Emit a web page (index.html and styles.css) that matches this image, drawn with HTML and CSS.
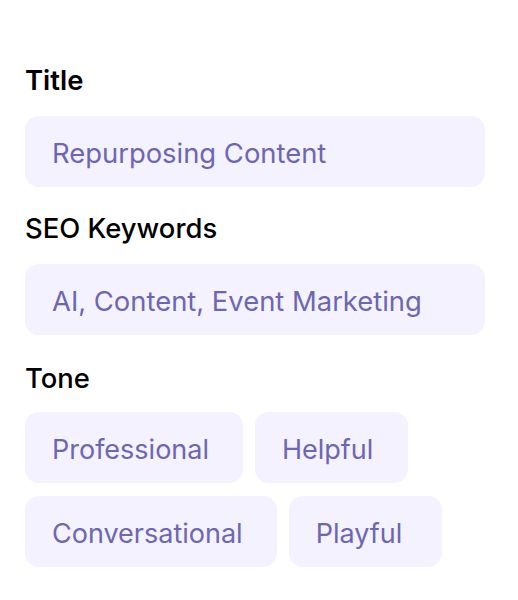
FILE: index.html
```html
<!DOCTYPE html>
<html>
<head>
<meta charset="utf-8">
<link rel="stylesheet" href="styles.css">
</head>
<body>
<div class="form">
  <div class="label label-title">Title</div>
  <div class="field">Repurposing Content</div>
  <div class="label label-seo">SEO Keywords</div>
  <div class="field">AI, Content, Event Marketing</div>
  <div class="label label-tone">Tone</div>
  <div class="chips">
    <div class="chip">Professional</div>
    <div class="chip">Helpful</div>
    <div class="chip">Conversational</div>
    <div class="chip">Playful</div>
  </div>
</div>
</body>
</html>
```
FILE: styles.css
```css
html, body {
  margin: 0;
  padding: 0;
  background: #ffffff;
}
body {
  font-family: Inter, "Noto Sans", sans-serif;
}
.form {
  width: 460px;
  padding: 65px 0 0 25px;
  display: flex;
  flex-direction: column;
}
.label {
  font-size: 27.4px;
  line-height: 31px;
  font-weight: 500;
  color: #000000;
}
.label-title {
  font-weight: 600;
  margin-bottom: 20px;
}
.label-seo {
  margin-top: 26px;
  margin-bottom: 20px;
}
.label-tone {
  margin-top: 28px;
  margin-bottom: 18px;
}
.field {
  box-sizing: border-box;
  height: 71px;
  padding: 22px 27px 18px;
  font-size: 27.4px;
  line-height: 31px;
  color: #6c66b3;
  background: #f4f2fe;
  border-radius: 14px;
}
.chips {
  display: flex;
  flex-wrap: wrap;
  column-gap: 12px;
  row-gap: 13px;
  width: 440px;
}
.chip {
  box-sizing: border-box;
  height: 71px;
  min-width: 153px;
  padding: 22px 34px 18px 27px;
  font-size: 27px;
  line-height: 31px;
  color: #6c66b3;
  background: #f4f2fe;
  border-radius: 14px;
}
```
